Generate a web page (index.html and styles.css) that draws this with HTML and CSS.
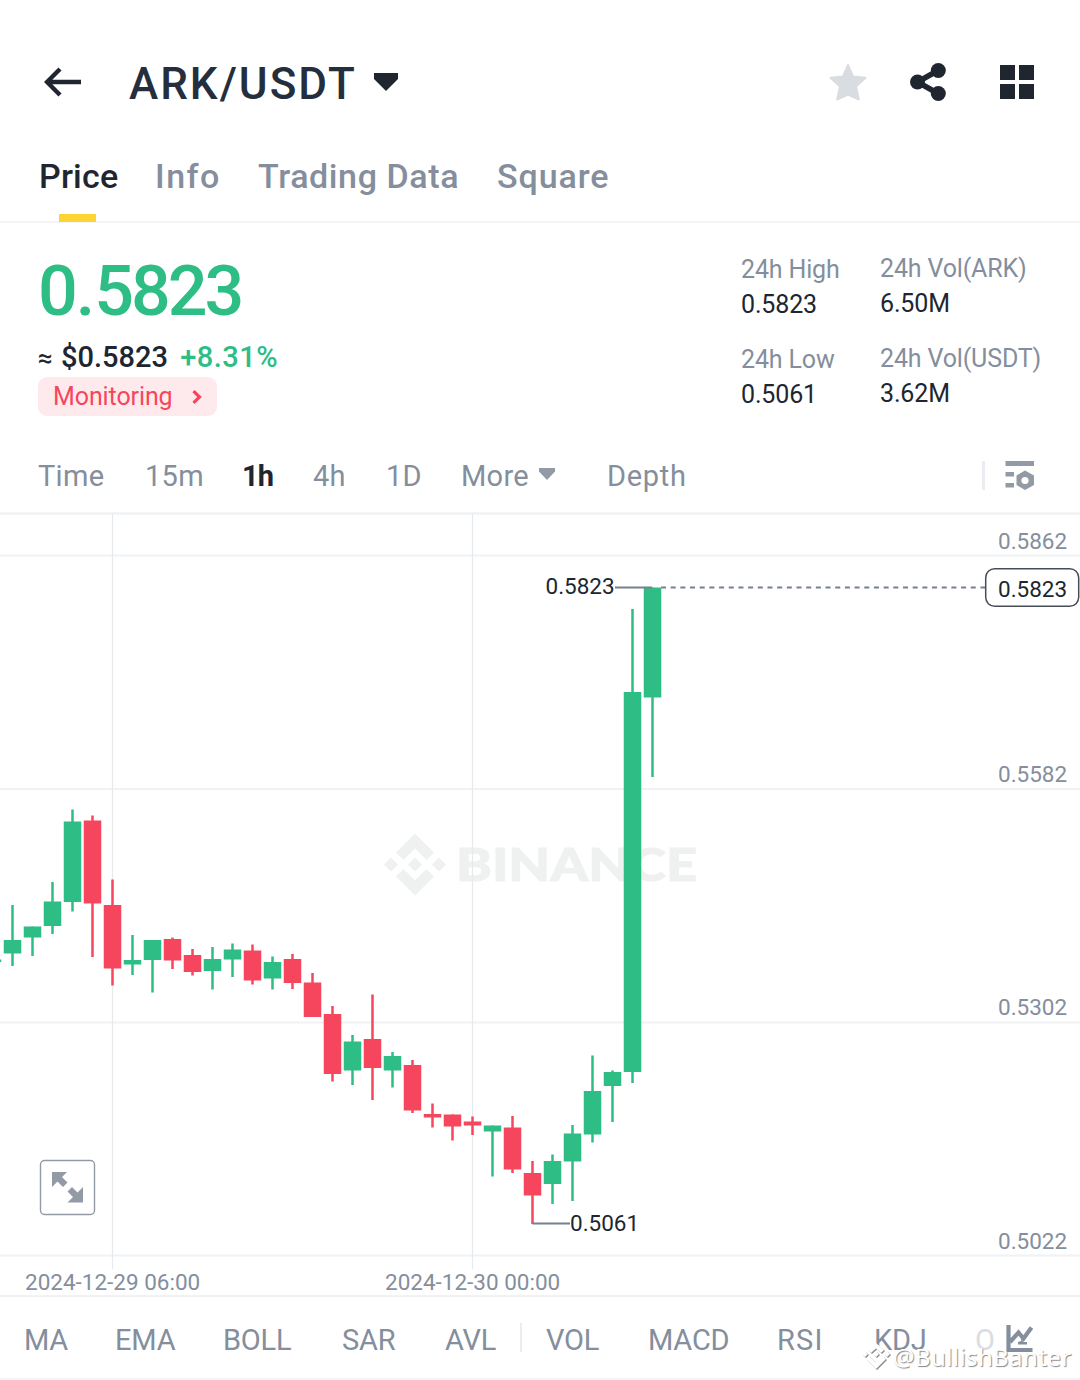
FILE: index.html
```
<!DOCTYPE html>
<html lang="en">
<head>
    <meta charset="UTF-8">
    <meta name="viewport" content="width=device-width, initial-scale=1.0">
    <title>ARK/USDT</title>
    <link rel="stylesheet" href="styles.css">
</head>
<body>

<header class="header">
    <svg class="back" width="38" height="30" viewBox="0 0 38 30"><path d="M37 15H3M16 2L3 15l13 13" fill="none" stroke="#202630" stroke-width="4.4"/></svg>
    <h1>ARK/USDT</h1>
    <svg class="caret" width="24" height="19" viewBox="0 0 24 19"><path d="M0 0h24v6L12 18 0 6z" fill="#202630"/></svg>
    <svg class="star" width="38" height="40" viewBox="0 0 38 40"><path d="M19 3l5 11.500 12.500 1.300-9.500 8.600 2.800 13.100L19 32.500 8.200 37.500 11 24.400 1.500 15.800 14 14.500z" fill="#d9dce1" stroke="#d9dce1" stroke-width="2" stroke-linejoin="round"/></svg>
    <svg class="share" width="36" height="40" viewBox="0 0 36 40"><path d="M28 8.500L7.500 20 28 31.500" fill="none" stroke="#202630" stroke-width="5.500"/><g fill="#202630"><circle cx="7.500" cy="20" r="7.500"/><circle cx="28.300" cy="8.500" r="7.500"/><circle cx="28.300" cy="31.500" r="7.500"/></g></svg>
    <svg class="grid-icon" width="34" height="34" viewBox="0 0 34 34"><path d="M0 0h15v15H0zM19 0h15v15H19zM0 19h15v15H0zM19 19h15v15H19z" fill="#202630"/></svg>
</header>

<nav class="tabs">
    <a class="active">Price</a>
    <a class="info">Info</a>
    <a>Trading Data</a>
    <a class="square">Square</a>
</nav>

<section class="summary">
    <div class="quote">
        <div class="last-price">0<span class="point">.</span>5823</div>
        <div class="change"><span class="approx">≈</span> <span class="usd">$0.5823</span> <span class="percent">+8.31%</span></div>
        <div class="tag">
            <span>Monitoring</span>
            <svg width="10" height="14" viewBox="0 0 10 14"><path d="M1.500 1.200L7.500 7l-6 5.800" fill="none" stroke="#f6465d" stroke-width="3.200"/></svg>
        </div>
    </div>
    <dl class="stats">
        <div><dt>24h High</dt><dd>0.5823</dd></div>
        <div><dt>24h Low</dt><dd>0.5061</dd></div>
    </dl>
    <dl class="stats volume">
        <div><dt>24h Vol(ARK)</dt><dd>6.50M</dd></div>
        <div><dt>24h Vol(USDT)</dt><dd>3.62M</dd></div>
    </dl>
</section>

<div class="intervals">
    <span>Time</span>
    <span>15m</span>
    <span class="active">1h</span>
    <span>4h</span>
    <span>1D</span>
    <span>More <svg class="more-caret" width="16" height="12" viewBox="0 0 16 12"><path d="M0 0h16v3.500L8 12 0 3.500z" fill="#929aa5"/></svg></span>
    <span class="depth">Depth</span>
    <svg class="settings" width="54" height="32" viewBox="0 0 54 32">
        <path d="M0 1h3v29H0z" fill="#eaecef"/>
        <path d="M23.500 1H52v5H23.500zM23.500 12H32v4.500h-8.500zM23.500 23H32v4.500h-8.500z" fill="#929aa5"/>
        <path d="M43 10.500l9 5v9.500l-9 5-8.500-5v-9.500z" fill="#929aa5"/>
        <circle cx="43" cy="20.500" r="3.600" fill="#fff"/>
    </svg>
</div>

<!-- Candlestick chart -->
<svg class="chart" width="1080" height="785" viewBox="0 512 1080 785">
    <g class="watermark">
        <path d="M415 833.500l19 19-7.500 7.500-11.500-11.500-11.500 11.500-7.500-7.500zM415 895.500l19-19-7.500-7.500-11.500 11.500-11.500-11.500-7.500 7.500zM415 857.500l7 7-7 7-7-7zM391 857.500l7 7-7 7-7-7zM439 857.500l7 7-7 7-7-7z"/>
        <text x="456" y="881" textLength="241" lengthAdjust="spacingAndGlyphs">BINANCE</text>
    </g>
    <g class="gridlines">
        <path d="M0 513.500H1080" stroke-width="2.500"/>
        <path d="M0 555.500H1080M0 789H1080M0 1022.500H1080M0 1255.500H1080M0 1296H1080" stroke-width="2"/>
        <path d="M112.500 514V1269M472.500 514V1269" stroke-width="1.200"/>
    </g>
    <g id="candles"></g>
    <path d="M615 587.500h37M532.500 1223.500H570" stroke="#76808f" stroke-width="2"/>
    <path d="M661 587.500H985" stroke="#76808f" stroke-width="2" stroke-dasharray="5 4.680"/>
    <rect x="985.700" y="568.700" width="93" height="37.600" rx="9" fill="#fff" stroke="#474d57" stroke-width="1.500"/>
    <g class="axis">
        <text x="998" y="548.500">0.5862</text>
        <text x="998" y="781.500">0.5582</text>
        <text x="998" y="1014.500">0.5302</text>
        <text x="998" y="1248.500">0.5022</text>
        <text x="25" y="1289.500" class="date">2024-12-29 06:00</text>
        <text x="385" y="1289.500" class="date">2024-12-30 00:00</text>
    </g>
    <g class="axis dark">
        <text x="998" y="596.500">0.5823</text>
        <text x="545.500" y="593.500">0.5823</text>
        <text x="570" y="1230.500">0.5061</text>
    </g>
    <rect x="40.500" y="1160.500" width="54" height="54" rx="4" fill="#fff" stroke="#929aa5" stroke-width="1.400"/>
    <path d="M52 1172h15l-5 5 5.500 5.500-4.500 4.500-5.500-5.500-5.500 5.500zM83 1202.500H67.500l5.500-5.500-5.500-5.500 4.500-4.500 5.500 5.500 5.500-5.500z" fill="#929aa5"/>
</svg>

<footer class="indicators">
    <span>MA</span>
    <span>EMA</span>
    <span>BOLL</span>
    <span>SAR</span>
    <span>AVL</span>
    <span class="sub">VOL</span>
    <span>MACD</span>
    <span class="rsi">RSI</span>
    <span>KDJ</span>
    <span class="faded">O</span>
    <svg class="indicator-icon" width="28" height="28" viewBox="0 0 28 28"><path d="M2.500 0v25H26.500M4 17L12.500 7.500l5 6L25.500 2.500" fill="none" stroke="#848e9c" stroke-width="4.200"/><path d="M15.500 13l1.500 4h4v2.500h-9V17l3-1z" fill="#848e9c"/></svg>
</footer>

<div class="credit">
    <svg width="28" height="28" viewBox="0 0 28 28"><path d="M6 7l8-7 8 7-3 3-5-4.500L9 10zM0 11l3-3 3 3-3 3zM11 11l3-3 3 3-3 3zM22 11l3-3 3 3-3 3zM4 16l3-3 7 7 7-7 3 3-10 10z"/></svg>
    <span>@BullishBanter</span>
</div>

<script src="chart.js"></script>
</body>
</html>
```

FILE: styles.css
```
* {
    box-sizing: border-box;
}
body {
    margin: 0;
    width: 1080px;
    height: 1380px;
    position: relative;
    overflow: hidden;
    background-color: #fff;
    color: #202630;
    font-family: Roboto, 'Liberation Sans', sans-serif;
}
svg {
    display: block;
    flex: none;
}
/* Header */
.header {
    display: flex;
    align-items: center;
    height: 130px;
    padding: 34px 46px 0 44px;
}
h1 {
    width: 229px;
    margin: 0 16px 0 47px;
    padding-top: 3px;
    font-size: 44px;
    font-weight: 500;
    letter-spacing: 2px;
    white-space: nowrap;
    color: #242e3d;
}
.star {
    margin-left: auto;
}
.share {
    margin-left: 43px;
}
.grid-icon {
    margin-left: 54px;
}
/* Tabs */
.tabs {
    display: grid;
    grid-template-columns: 116px 103px 239px auto;
    height: 93px;
    padding-left: 39px;
    border-bottom: 2px solid #f3f4f5;
    font-size: 34px;
    font-weight: 500;
    line-height: 92px;
    letter-spacing: 0.6px;
    white-space: nowrap;
    color: #848e9c;
}
.tabs .active {
    position: relative;
    letter-spacing: 0.2px;
    color: #202630;
}
.tabs .info {
    letter-spacing: 1.5px;
}
.tabs .square {
    letter-spacing: 0.9px;
}
.tabs .active::after {
    content: "";
    position: absolute;
    left: 20px;
    bottom: 0;
    width: 37px;
    height: 8px;
    background-color: #fcd535;
}
/* Price and 24h stats */
.summary {
    display: flex;
    height: 215px;
    padding-left: 38px;
}
.quote {
    width: 702px;
    padding-top: 27px;
}
.last-price {
    height: 88px;
    font-size: 70px;
    font-weight: 500;
    line-height: 83px;
    letter-spacing: -3px;
    color: #2ebd85;
}
.point {
    margin: 0 2px 0 1px;
}
.change {
    height: 39px;
    font-size: 29px;
    font-weight: 500;
    line-height: 39px;
    white-space: nowrap;
}
.approx {
    margin-right: 1px;
    font-size: 26px;
}
.percent {
    margin-left: 5px;
    letter-spacing: 0.5px;
    color: #2ebd85;
}
.tag {
    display: flex;
    align-items: center;
    justify-content: space-between;
    width: 179px;
    height: 39px;
    padding: 0 15px;
    border-radius: 9px;
    background-color: #feeaed;
    font-size: 25px;
    letter-spacing: -0.1px;
    color: #f6465d;
}
.stats {
    width: 139px;
    margin: 0;
    padding: 29px 0 0 1px;
    font-size: 25px;
    letter-spacing: -0.15px;
    white-space: nowrap;
}
.stats div {
    height: 90px;
}
.stats dt {
    line-height: 36px;
    color: #848e9c;
}
.stats dd {
    margin: 0;
    line-height: 34px;
}
.volume {
    width: 180px;
    padding-top: 28px;
}
/* Interval picker */
.intervals {
    display: grid;
    grid-template-columns: 107px 97px 71px 73px 75px 146px 375px 54px;
    align-items: center;
    height: 74px;
    padding: 2px 0 0 38px;
    font-size: 29px;
    letter-spacing: 0.3px;
    color: #848e9c;
}
.intervals .active {
    font-weight: 700;
    letter-spacing: -0.8px;
    color: #202630;
}
.intervals .depth {
    letter-spacing: 0.7px;
}
.more-caret {
    display: inline-block;
    margin-left: 2px;
    vertical-align: 6px;
}
/* Chart */
.watermark {
    fill: #eff1f1;
}
.watermark text {
    font-family: Lato, sans-serif;
    font-size: 46px;
    font-weight: 900;
    stroke: #eff1f1;
    stroke-width: 1;
}
.gridlines {
    stroke: #f0f2f3;
}
.gridlines path:last-child {
    stroke: #e6eaec;
}
.axis {
    font-size: 22.5px;
    fill: #848e9c;
}
.dark {
    fill: #202630;
}
.up {
    fill: #2ebd85;
}
.down {
    fill: #f6465d;
}
/* Indicator picker */
.indicators {
    display: grid;
    grid-template-columns: 91px 108px 119px 103px 101px 102px 129px 97px 101px 31px 28px;
    align-items: center;
    height: 83px;
    padding: 5px 0 0 24px;
    border-bottom: 2px solid #f3f4f5;
    font-size: 29px;
    letter-spacing: -0.2px;
    color: #848e9c;
}
.sub {
    position: relative;
}
.sub::before {
    content: "";
    position: absolute;
    left: -26px;
    top: 0;
    width: 2px;
    height: 29px;
    background-color: #eaecef;
}
.rsi {
    letter-spacing: 1.2px;
}
.faded {
    color: #d9dde2;
}
.indicator-icon {
    margin-bottom: 3px;
}
/* Author mark over the indicators */
.credit {
    position: absolute;
    left: 862px;
    top: 1341px;
    display: flex;
    align-items: center;
    gap: 3px;
    font-family: 'Noto Sans', sans-serif;
    font-size: 24px;
    line-height: 32px;
    letter-spacing: 0.4px;
    color: #fff;
    text-shadow: 1px 1px 1px #888;
}
.credit svg {
    fill: #fff;
    filter: drop-shadow(1px 1px 0.5px #888);
}
```

FILE: chart.js
```
// [wick top, body top, body bottom, wick bottom, direction], one per hour
const candles = [
    [959.5, 959.5, 962, 962, 'up'],
    [905, 940, 953.5, 966, 'up'],
    [926.5, 926.5, 937.5, 956, 'up'],
    [882, 901.5, 926, 934, 'up'],
    [809.5, 821.5, 902, 911.5, 'up'],
    [815.5, 820.5, 903.5, 957, 'down'],
    [879.5, 905, 968.5, 985.5, 'down'],
    [935, 960, 964.5, 975, 'up'],
    [940, 940, 960, 992.5, 'up'],
    [937.5, 939, 960.5, 969, 'down'],
    [949, 955, 972, 975.5, 'down'],
    [947, 959, 971, 989.5, 'up'],
    [943.5, 949.5, 959.5, 977, 'up'],
    [944.5, 950.5, 980.5, 984.5, 'down'],
    [956.5, 962, 978.5, 989.5, 'up'],
    [954, 959, 983, 989, 'down'],
    [973, 982.5, 1017, 1017, 'down'],
    [1006, 1014, 1074, 1081.5, 'down'],
    [1035, 1041.5, 1070.5, 1085, 'up'],
    [994.5, 1039, 1068, 1100, 'down'],
    [1052, 1056, 1070.5, 1087.5, 'up'],
    [1060, 1065, 1110.5, 1113, 'down'],
    [1103.5, 1114, 1117.5, 1127.5, 'down'],
    [1114.5, 1114.5, 1126.5, 1140.5, 'down'],
    [1116.5, 1121.5, 1125.5, 1135, 'down'],
    [1125.5, 1125.5, 1131.5, 1176.5, 'up'],
    [1116, 1127.5, 1169.5, 1173, 'down'],
    [1161, 1173, 1195.5, 1224, 'down'],
    [1154.5, 1161, 1184, 1204, 'up'],
    [1125, 1133.5, 1161.5, 1201, 'up'],
    [1055.5, 1091, 1134.5, 1142.5, 'up'],
    [1070.5, 1072, 1086, 1122, 'up'],
    [609, 692, 1072, 1083, 'up'],
    [587.5, 587.5, 697.5, 777, 'up']
];

document.getElementById('candles').innerHTML = candles.map(([high, top, bottom, low, dir], i) => {
    const x = i * 20 - 7.5;
    return `<g class="${dir}">
        <rect x="${x - 1.25}" y="${high}" width="2.5" height="${low - high}"/>
        <rect x="${x - 8.75}" y="${top}" width="17.5" height="${bottom - top}"/>
    </g>`;
}).join('');
```
